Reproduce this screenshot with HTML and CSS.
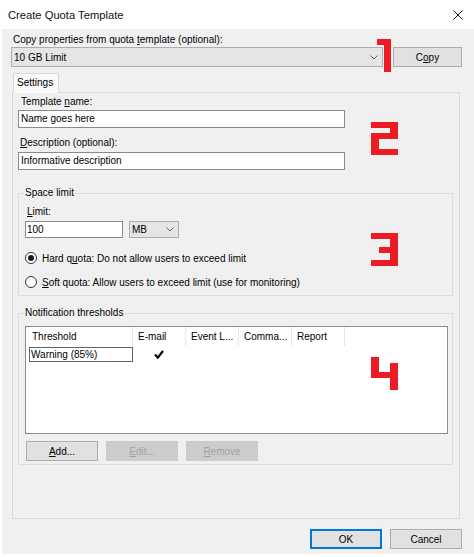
FILE: index.html
```html
<!DOCTYPE html>
<html>
<head>
<meta charset="utf-8">
<title>Create Quota Template</title>
<link rel="stylesheet" href="styles.css">
</head>
<body>
<div class="window">
  <div class="titlebar">
    <span class="title">Create Quota Template</span>
    <svg class="close" width="10" height="10" viewBox="0 0 10 10"><path d="M0.5 0.5 L9.5 9.5 M9.5 0.5 L0.5 9.5" stroke="#1a1a1a" stroke-width="1" fill="none"/></svg>
  </div>
  <div class="client">
    <div class="lbl top-lbl">Copy properties from quota <u>t</u>emplate (optional):</div>
    <div class="combo-row">
      <div class="combo combo-wide"><span>10 GB Limit</span><svg class="chev" width="8" height="5" viewBox="0 0 8 5"><path d="M0.5 0.5 L4 4 L7.5 0.5" stroke="#606060" fill="none"/></svg></div>
      <div class="btn btn-copy">C<u>o</u>py</div>
    </div>
    <div class="tabs"><div class="tab">Settings</div></div>
    <div class="panel">
      <div class="lbl name-lbl">Template <u>n</u>ame:</div>
      <div class="textbox wide">Name goes here</div>
      <div class="lbl desc-lbl"><u>D</u>escription (optional):</div>
      <div class="textbox wide">Informative description</div>
      <fieldset class="group space">
        <legend>Space limit</legend>
        <div class="lbl limit-lbl"><u>L</u>imit:</div>
        <div class="limit-row">
          <div class="textbox limit">100</div>
          <div class="combo mb"><span>MB</span><svg class="chev" width="8" height="5" viewBox="0 0 8 5"><path d="M0.5 0.5 L4 4 L7.5 0.5" stroke="#606060" fill="none"/></svg></div>
        </div>
        <div class="radio-row first"><span class="radio checked"></span><span>Hard q<u>u</u>ota: Do not allow users to exceed limit</span></div>
        <div class="radio-row second"><span class="radio"></span><span><u>S</u>oft quota: Allow users to exceed limit (use for monitoring)</span></div>
      </fieldset>
      <fieldset class="group notif">
        <legend>Notification thresholds</legend>
        <div class="listview">
          <div class="lv-head">
            <div class="col c1">Threshold</div>
            <div class="col">E-mail</div>
            <div class="col">Event L...</div>
            <div class="col">Comma...</div>
            <div class="col">Report</div>
          </div>
          <div class="lv-row">
            <div class="cell-edit">Warning (85%)</div>
            <svg class="check" width="10" height="9" viewBox="0 0 10 9"><path d="M1 4.6 L3.8 7.6 L9 1" stroke="#000" stroke-width="2.2" fill="none"/></svg>
          </div>
        </div>
        <div class="btn-row">
          <div class="btn"><u>A</u>dd...</div>
          <div class="btn disabled"><u>E</u>dit...</div>
          <div class="btn disabled"><u>R</u>emove</div>
        </div>
      </fieldset>
    </div>
    <div class="footer">
      <div class="btn default">OK</div>
      <div class="btn">Cancel</div>
    </div>
  </div>

  <svg class="mark m1" width="14" height="33" viewBox="0 0 14 33"><rect x="0" y="0" width="14" height="6"/><rect x="7" y="0" width="7" height="33"/></svg>
  <svg class="mark m2" width="27" height="33" viewBox="0 0 27 33"><rect x="0" y="0" width="27" height="6"/><rect x="19" y="0" width="8" height="17"/><rect x="0" y="11" width="27" height="6"/><rect x="0" y="11" width="8" height="22"/><rect x="0" y="27" width="27" height="6"/></svg>
  <svg class="mark m3" width="27" height="33" viewBox="0 0 27 33"><rect x="0" y="0" width="27" height="6"/><rect x="19" y="0" width="8" height="33"/><rect x="8" y="14" width="19" height="6"/><rect x="0" y="27" width="27" height="6"/></svg>
  <svg class="mark m4" width="27" height="33" viewBox="0 0 27 33"><rect x="0" y="0" width="8" height="21"/><rect x="0" y="15" width="27" height="6"/><rect x="19" y="6" width="8" height="27"/></svg>
</div>
</body>
</html>
```

FILE: styles.css
```css
* { box-sizing: border-box; }
html, body { margin: 0; padding: 0; background: #ffffff; }
body {
  font-family: "Liberation Sans", Arial, sans-serif;
  font-size: 10px;
  color: #000;
}
u { text-decoration: underline; text-underline-offset: 1px; }

.window {
  position: relative;
  width: 474px;
  height: 557px;
  overflow: hidden;
  background: #ffffff;
}

.titlebar {
  height: 29px;
  display: flex;
  align-items: center;
  justify-content: space-between;
  padding: 0 11px 0 8px;
  background: #ffffff;
}
.title { font-size: 11.2px; color: #111; }
.close { display: block; }

.client {
  background: #f0f0f0;
  margin-left: 2px;
  height: 525px;
  padding: 5px 12px 0 9px;
}

.lbl { line-height: 12px; white-space: nowrap; }
.top-lbl { padding-left: 2px; margin-bottom: 1px; }

.combo-row { display: flex; gap: 10px; height: 20px; }
.combo {
  display: flex;
  align-items: center;
  justify-content: space-between;
  background: #e5e5e5;
  border: 1px solid #adadad;
}
.combo-wide { flex: 1; height: 20px; padding: 0 4px 0 2px; }
.chev { display: block; }

.btn {
  display: flex;
  align-items: center;
  justify-content: center;
  width: 72px;
  height: 20px;
  background: #e1e1e1;
  border: 1px solid #adadad;
  white-space: nowrap;
}
.btn-copy { width: 69px; }
.btn.disabled { background: #cccccc; border-color: #cccccc; color: #a2a2a2; }
.btn.default { border: 1px solid #0078d7; box-shadow: inset 0 0 0 1px #0078d7; }

.tabs { display: flex; margin-top: 6px; margin-left: 2px; }
.tab {
  position: relative;
  z-index: 1;
  width: 46px;
  height: 20px;
  margin-bottom: -1px;
  border: 1px solid #d9d9d9;
  border-bottom: none;
  background: #f9f9f9;
  padding-left: 3px;
  line-height: 17px;
}

.panel {
  margin-left: 1px;
  width: 448px;
  height: 427px;
  border: 1px solid #d9d9d9;
  padding: 3px 6px 0 5px;
}

.textbox {
  background: #ffffff;
  border: 1px solid #8a8a8a;
  white-space: nowrap;
}
.textbox.wide { width: 327px; height: 18px; line-height: 16px; padding-left: 2px; }

.name-lbl { padding-left: 3px; margin-bottom: 2px; }
.desc-lbl { padding-left: 2px; margin-top: 9px; margin-bottom: 3px; }

.group {
  margin: 0;
  width: 435px;
  min-width: 0;
  border: 1px solid #dcdcdc;
  padding: 7px 6px 5px 6px;
}
.group legend {
  padding: 0 1px;
  margin-left: -1px;
  line-height: 12px;
  font-size: 10px;
}
.space { margin-top: 17px; }
.notif { margin-top: 11px; padding-bottom: 3px; }

.limit-lbl { padding-left: 2px; margin-bottom: 3px; }
.limit-row { display: flex; align-items: flex-start; gap: 6px; }
.textbox.limit { width: 98px; height: 17px; line-height: 15px; padding-left: 1px; }
.combo.mb { width: 50px; height: 17px; padding: 0 4px 0 2px; }

.radio-row { display: flex; align-items: center; gap: 5px; height: 16px; white-space: nowrap; }
.radio-row.first { margin-top: 12px; }
.radio-row.second { margin-top: 8px; }
.radio {
  width: 12px;
  height: 12px;
  border: 1px solid #333333;
  border-radius: 50%;
  background: #ffffff;
  display: flex;
  align-items: center;
  justify-content: center;
}
.radio.checked::after {
  content: "";
  width: 6px;
  height: 6px;
  border-radius: 50%;
  background: #1a1a1a;
}

.listview {
  width: 423px;
  height: 108px;
  background: #ffffff;
  border: 1px solid #8c8c8c;
}
.lv-head { display: flex; height: 19px; }
.col {
  width: 53px;
  line-height: 19px;
  padding-left: 5px;
  border-right: 1px solid #e5e5e5;
  white-space: nowrap;
  overflow: hidden;
}
.col.c1 { width: 107px; padding-left: 6px; }
.lv-row { display: flex; align-items: center; margin-top: 1px; }
.cell-edit {
  margin-left: 3px;
  width: 104px;
  height: 15px;
  line-height: 13px;
  border: 1px solid #646464;
  padding-left: 1px;
  white-space: nowrap;
}
.check { display: block; margin-left: 21px; }

.btn-row { display: flex; gap: 8px; margin-top: 7px; margin-left: 1px; }

.footer { display: flex; justify-content: flex-end; gap: 8px; margin-top: 10px; }

.mark { position: absolute; fill: #ec1c24; }
.m1 { left: 377px; top: 39px; }
.m2 { left: 371px; top: 122px; }
.m3 { left: 371px; top: 233px; }
.m4 { left: 371px; top: 357px; }
```
